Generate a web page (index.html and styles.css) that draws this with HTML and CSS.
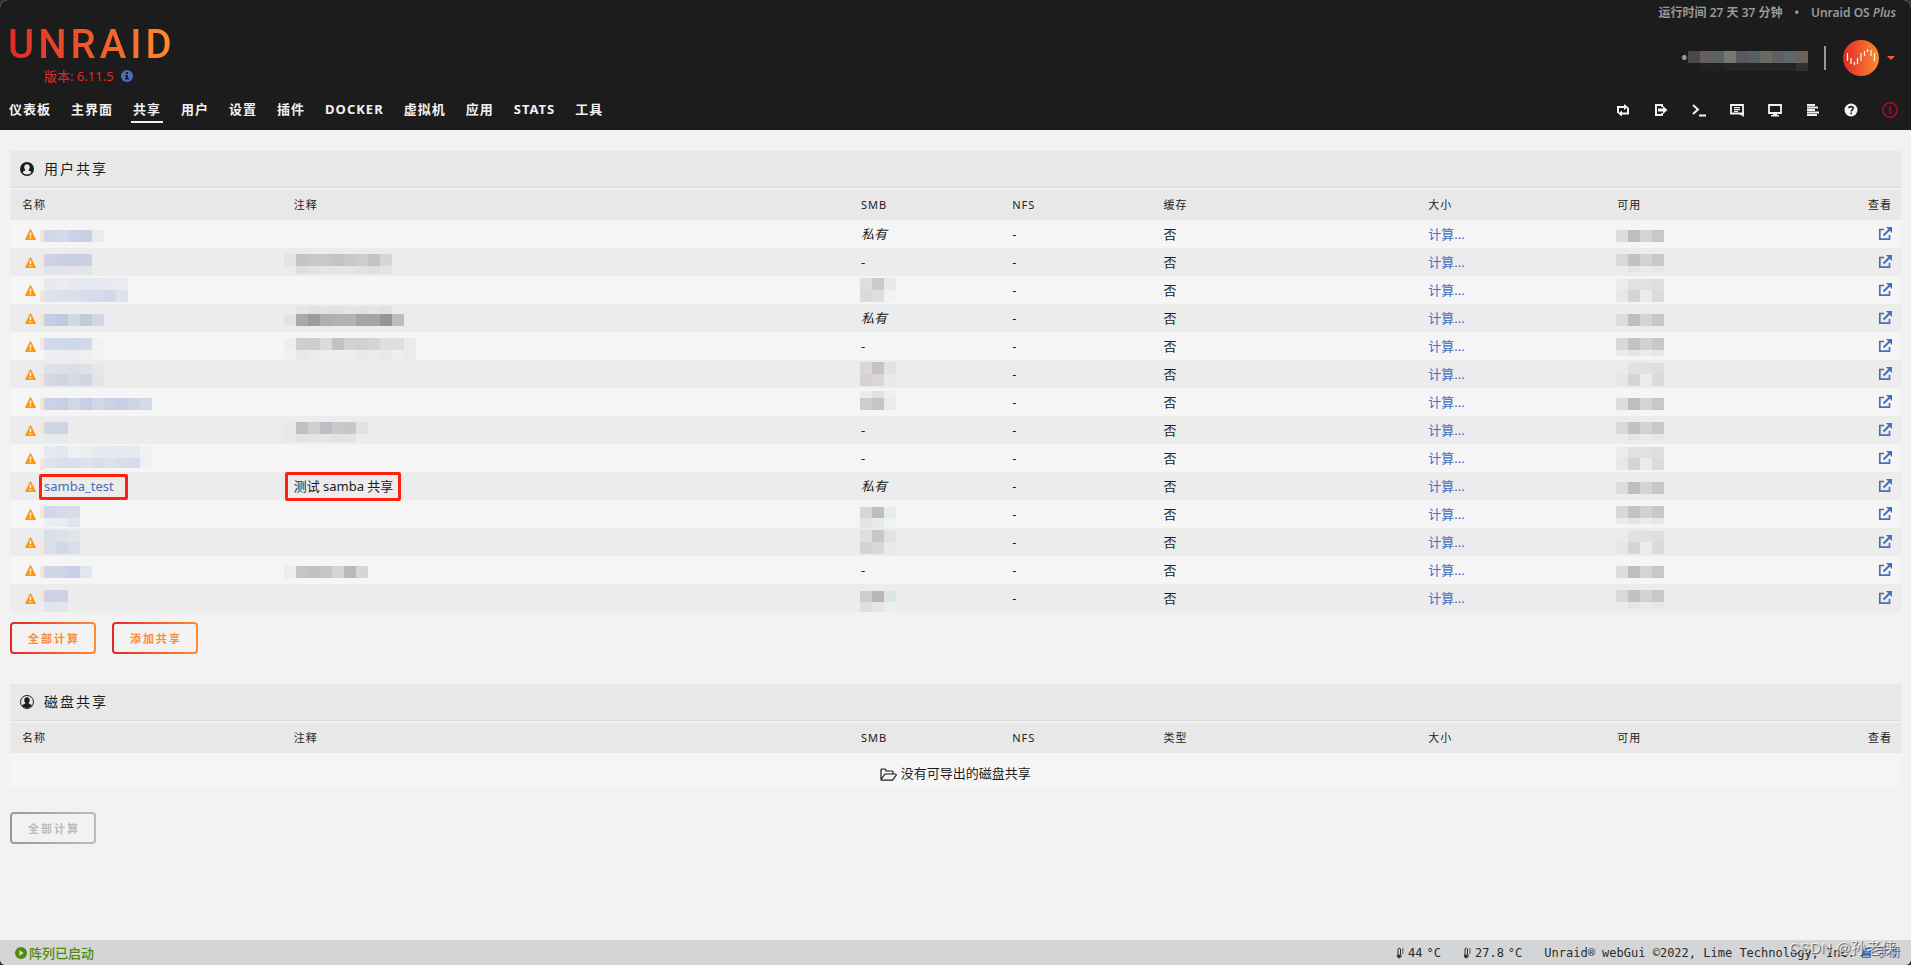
FILE: index.html
```html
<!DOCTYPE html>
<html lang="zh-CN">
<head>
    <meta charset="UTF-8">
    <meta name="viewport" content="width=device-width, initial-scale=1.0">
    <title>Tower/Shares</title>
    <link rel="stylesheet" href="styles.css">
</head>
<body>

    <!-- Header -->
    <header class="header">
        <div class="brand">
            <a href="#" class="logo">UNRAID</a>
            <div class="version">版本: 6.11.5
                <svg class="icon-info" viewBox="0 0 12 12"><circle cx="6" cy="6" r="6" fill="currentColor"/><path d="M5 2h2v2H5zM4 5h3v3h1v1.500H4V8h1V6.200H4z" fill="#1c1c1c"/></svg>
            </div>
        </div>
        <div class="server">
            <div class="uptime"><span>运行时间 27 天 37 分钟</span><span>•</span><span>Unraid OS <em>Plus</em></span></div>
            <div class="account">
                <span class="dot">•</span>
                <span id="serverName" class="server-name"></span>
                <span class="divider"></span>
                <svg class="avatar" viewBox="0 0 36 36">
                    <defs><linearGradient id="avatarFill"><stop offset="0" stop-color="#e22828"/><stop offset="1" stop-color="#ff8c2f"/></linearGradient></defs>
                    <circle cx="18" cy="18" r="18" fill="url(#avatarFill)"/>
                    <path d="M4.500 13v8M8 18v6M11.500 22v3M14.500 18v6M18 13v8M21.500 11v5M24.500 9v3M28 10v6M31.500 13v8" stroke="#fff" stroke-width="1.200"/>
                </svg>
                <svg class="caret" viewBox="0 0 8 4"><path d="M0 0h8L4 4z" fill="#f15a2c"/></svg>
            </div>
        </div>
    </header>

    <!-- Menu -->
    <nav class="nav">
        <div class="nav-left">
            <a href="#">仪表板</a>
            <a href="#">主界面</a>
            <a href="#" class="active">共享</a>
            <a href="#">用户</a>
            <a href="#">设置</a>
            <a href="#">插件</a>
            <a href="#">DOCKER</a>
            <a href="#">虚拟机</a>
            <a href="#">应用</a>
            <a href="#">STATS</a>
            <a href="#">工具</a>
        </div>
        <div class="nav-right">
            <a href="#" aria-label="language"><svg viewBox="0 0 14 14"><path d="M2 10V4h7M5 10.500h7V4.500" fill="none" stroke="currentColor" stroke-width="2"/><path d="M8 1l4 3-4 3zM6 7.500l-4 3 4 3z" fill="currentColor"/></svg></a>
            <a href="#" aria-label="logout"><svg viewBox="0 0 14 14"><path d="M8 4V2H2v10h6v-2" fill="none" stroke="currentColor" stroke-width="2"/><path d="M4 5.500h5V3l4.500 4L9 11V8.500H4z" fill="currentColor"/></svg></a>
            <a href="#" aria-label="terminal"><svg viewBox="0 0 14 14"><path d="M1 2l5 4.500L1 11M7 12.500h7" fill="none" stroke="currentColor" stroke-width="2"/></svg></a>
            <a href="#" aria-label="feedback"><svg viewBox="0 0 14 14"><path d="M1 2h12v8.500H1z" fill="none" stroke="currentColor" stroke-width="1.800"/><path d="M8 10h5.800v4zM4 4h6v1.200H4zM4 6h6v1.200H4zM4 8h4v1H4z" fill="currentColor"/></svg></a>
            <a href="#" aria-label="info"><svg viewBox="0 0 14 14"><path d="M1 2h12v8H1z" fill="none" stroke="currentColor" stroke-width="1.800"/><path d="M5 10h4v2h2v1.500H3V12h2z" fill="currentColor"/></svg></a>
            <a href="#" aria-label="log"><svg viewBox="0 0 14 14"><path d="M1 2h8M1 4.500h11M1 7h8M1 9.500h12M1 12h10" stroke="currentColor" stroke-width="1.900"/></svg></a>
            <a href="#" aria-label="help"><svg viewBox="0 0 14 14"><circle cx="7" cy="7" r="6.500" fill="currentColor"/><path d="M4.800 5.300C5 3 9.200 3 9.200 5.300 9.200 6.800 7.200 6.800 7.200 8.500M7.200 9.500v1.800" fill="none" stroke="#1c1c1c" stroke-width="1.600"/></svg></a>
            <a href="#" aria-label="alert" class="alert"><svg viewBox="0 0 16 16"><circle cx="8" cy="8" r="7.200" fill="none" stroke="currentColor" stroke-width="1.400"/><path d="M8 4v8" stroke="currentColor" stroke-width="1.600"/></svg></a>
        </div>
    </nav>

    <!-- Content -->
    <main class="content">
        <h2 class="title">
            <svg viewBox="0 0 14 14"><circle cx="7" cy="7" r="7" fill="currentColor"/><path d="M7 2.300c-3.300 0-3.400 4.200-1.500 5.600C5.300 9 2.800 8.800 2.600 10.600c2 2.500 6.800 2.500 8.800 0C11.200 8.800 8.700 9 8.500 7.900 10.400 6.500 10.300 2.300 7 2.300z" fill="#e8e8e8"/></svg>
            用户共享
        </h2>
        <table class="shares">
            <colgroup><col class="w15"><col class="w30"><col class="w8"><col class="w8"><col class="w14"><col class="w10"><col class="w10"><col class="w5"></colgroup>
            <thead>
                <tr><th>名称</th><th>注释</th><th>SMB</th><th>NFS</th><th>缓存</th><th>大小</th><th>可用</th><th>查看</th></tr>
            </thead>
            <tbody id="shareList"></tbody>
        </table>
        <div class="buttons">
            <button type="button">全部计算</button>
            <button type="button">添加共享</button>
        </div>

        <h2 class="title">
            <svg viewBox="0 0 14 14"><circle cx="7" cy="7" r="6.500" fill="none" stroke="currentColor"/><path d="M7 2.300c-3.300 0-3.400 4.200-1.500 5.600C5.300 9 2.800 8.800 2 10.600c2 3.300 8 3.300 10 0C11.200 8.800 8.700 9 8.500 7.900 10.400 6.500 10.300 2.300 7 2.300z" fill="currentColor"/></svg>
            磁盘共享
        </h2>
        <table class="shares">
            <colgroup><col class="w15"><col class="w30"><col class="w8"><col class="w8"><col class="w14"><col class="w10"><col class="w10"><col class="w5"></colgroup>
            <thead>
                <tr><th>名称</th><th>注释</th><th>SMB</th><th>NFS</th><th>类型</th><th>大小</th><th>可用</th><th>查看</th></tr>
            </thead>
            <tbody>
                <tr><td colspan="8" class="empty">
                    <svg viewBox="0 0 17 13"><path d="M1 11V2q0-1 1-1h3q1 0 1 1v1h6q1 0 1 1v2H5L1 11.500q0 .700 1 .700h10.500L16.300 7q0-1-1-1H13" fill="none" stroke="currentColor" stroke-width="1.200"/></svg>
                    没有可导出的磁盘共享
                </td></tr>
            </tbody>
        </table>
        <div class="buttons last">
            <button type="button" disabled>全部计算</button>
        </div>
    </main>

    <!-- Footer -->
    <footer class="footer">
        <div class="status">
            <svg viewBox="0 0 12 12"><circle cx="6" cy="6" r="6" fill="currentColor"/><path d="M4.300 3l4.500 3-4.500 3z" fill="#d4d5d6"/></svg>
            阵列已启动
        </div>
        <div class="footer-right">
            <span class="temp"><svg viewBox="0 0 8 12"><path d="M2 7V2q1-2 2.500 0v5q1.500 2 0 3.500-1.200 1-2.500 0Q.500 9 2 7zM6 2h1.500M6 4h1.500M6 6h1.500" fill="none" stroke="currentColor"/><circle cx="3.200" cy="9" r="1.400" fill="currentColor"/></svg>44<span>°C</span></span>
            <span class="temp"><svg viewBox="0 0 8 12"><path d="M2 7V2q1-2 2.500 0v5q1.500 2 0 3.500-1.200 1-2.500 0Q.500 9 2 7zM6 2h1.500M6 4h1.500M6 6h1.500" fill="none" stroke="currentColor"/><circle cx="3.200" cy="9" r="1.400" fill="currentColor"/></svg>27.8<span>°C</span></span>
            <span class="copyright">Unraid® webGui ©2022, Lime Technology, Inc.</span>
            <a href="#"><svg viewBox="0 0 12 12"><path d="M3 1h8.500L9.500 11H1.500Q0 10.500.500 9z" fill="currentColor"/><path d="M4.500 3h5M4 5h5M2 9.300h6.500" stroke="#d4d5d6"/></svg>手册</a>
        </div>
        <span class="watermark">CSDN @孙老侠</span>
    </footer>

    <script src="script.js"></script>
</body>
</html>
```
FILE: styles.css
```css
/* General */
* {
    box-sizing: border-box;
}

html {
    background-color: #333;
}

body {
    display: flex;
    flex-direction: column;
    min-height: 100vh;
    margin: 0;
    border-radius: 8px 8px 6px 6px;
    overflow: hidden;
    background-color: #f2f2f2;
    color: #1c1c1c;
    font-family: "Noto Sans", "Noto Sans CJK SC", sans-serif;
    font-size: 13px;
    line-height: 20px;
}

a {
    color: #486dba;
    text-decoration: none;
}

svg {
    flex: none;
}

/* Header */
.header {
    display: flex;
    justify-content: space-between;
    height: 90px;
    padding: 0 10px 0 8px;
    background-color: #1c1c1c;
}

.logo {
    display: block;
    width: 168px;
    margin-top: 24px;
    background-image: linear-gradient(90deg, #e22828, #ff8c2f);
    background-clip: text;
    color: transparent;
    font-family: Roboto, sans-serif;
    font-size: 40px;
    font-weight: 500;
    letter-spacing: 4px;
    line-height: 42px;
}

.version {
    display: flex;
    align-items: center;
    gap: 7px;
    padding-left: 36px;
    color: #e22828;
}

.icon-info {
    width: 12px;
    height: 12px;
    color: #486dba;
}

.server {
    display: flex;
    flex-direction: column;
    align-items: flex-end;
}

.uptime {
    display: flex;
    gap: 12px;
    padding: 3px 5px 0 0;
    color: #999;
    font-size: 12px;
    font-weight: 600;
}

.account {
    display: flex;
    align-items: center;
    margin-top: 17px;
    padding-right: 6px;
}

.dot {
    margin-right: 5px;
    color: #999;
    font-size: 20px;
}

.server-name {
    width: 115px;
    height: 20px;
}

.divider {
    width: 2px;
    height: 24px;
    margin: 0 17px 0 16px;
    background-color: #999;
}

.avatar {
    width: 36px;
    height: 36px;
}

.caret {
    width: 8px;
    height: 4px;
    margin-left: 8px;
}

/* Menu */
.nav {
    display: flex;
    justify-content: space-between;
    height: 40px;
    padding: 0 13px 0 9px;
    background-color: #1c1c1c;
}

.nav-left {
    display: flex;
    gap: 20px;
}

.nav-left a {
    height: 33px;
    padding-top: 9px;
    color: #f2f2f2;
    font-size: 13px;
    font-weight: bold;
    letter-spacing: 1px;
}

.nav-left a.active {
    margin: 0 -2px;
    padding: 9px 2px 0;
    border-bottom: 2px solid #f2f2f2;
}

.nav-right {
    display: flex;
    align-items: center;
    gap: 24px;
}

.nav-right a {
    display: flex;
    color: #f2f2f2;
}

.nav-right svg {
    width: 14px;
    height: 14px;
}

.nav-right a.alert {
    color: #b8082a;
}

.nav-right .alert svg {
    width: 16px;
    height: 16px;
}

/* Content */
.content {
    flex: 1;
    padding: 21px 10px 0;
}

.title {
    display: flex;
    align-items: center;
    gap: 10px;
    height: 37px;
    margin: 0 0 2px;
    padding-left: 10px;
    border-bottom: 1px solid #dfdfdf;
    background-color: #e8e8e8;
    font-size: 14px;
    font-weight: normal;
    letter-spacing: 2px;
}

.title svg {
    width: 14px;
    height: 14px;
}

.shares {
    width: 100%;
    table-layout: fixed;
    border-collapse: collapse;
}

.w5 { width: 5%; }
.w8 { width: 8%; }
.w10 { width: 10%; }
.w14 { width: 14%; }
.w15 { width: 15%; }
.w30 { width: 30%; }

.shares th {
    height: 30px;
    padding: 0;
    background-color: #e8e8e8;
    font-size: 11px;
    font-weight: normal;
    letter-spacing: 1px;
    text-align: left;
}

.shares th:first-child {
    padding-left: 12px;
}

.shares th:last-child {
    padding-right: 9px;
    text-align: right;
}

.shares td {
    position: relative;
    height: 28px;
    padding: 0;
    background-color: #f5f5f5;
}

.shares tr:nth-child(even) td {
    background-color: #ececec;
}

.name {
    display: flex;
    align-items: center;
    gap: 8px;
    padding-left: 15px;
}

.warning {
    width: 11px;
    height: 11px;
}

.mosaic {
    display: block;
    width: 1px;
    height: 28px;
    overflow: visible;
}

.mosaic-name {
    margin-left: -4px;
}

.view {
    display: flex;
    justify-content: flex-end;
    padding-right: 9px;
}

.view svg {
    width: 14px;
    height: 14px;
}

/* Highlight frames */
.frame {
    position: absolute;
    border: 3px solid #ff2012;
    border-radius: 2px;
}

.frame-name {
    top: 2px;
    left: 29px;
    width: 89px;
    height: 26px;
}

.frame-comment {
    top: 0;
    left: -9px;
    z-index: 1;
    width: 116px;
    height: 29px;
}

.shares td.empty {
    height: 36px;
    padding-top: 4px;
    text-align: center;
}

.empty svg {
    width: 17px;
    height: 13px;
    vertical-align: middle;
}

/* Buttons */
.buttons {
    display: flex;
    gap: 16px;
    padding: 10px 0 30px;
}

.buttons.last {
    padding-top: 23px;
}

button {
    height: 32px;
    padding: 0 14px 0 16px;
    border: 2px solid transparent;
    border-radius: 4px;
    background: linear-gradient(#f2f2f2, #f2f2f2) padding-box, linear-gradient(90deg, #e22828, #ff8c2f) border-box;
    color: #ff8c2f;
    font-family: inherit;
    font-size: 11px;
    font-weight: bold;
    letter-spacing: 2px;
    cursor: pointer;
}

button:disabled {
    background: linear-gradient(#f2f2f2, #f2f2f2) padding-box, linear-gradient(90deg, #999, #bbb) border-box;
    color: #bbb;
    cursor: default;
}

/* Footer */
.footer {
    position: relative;
    display: flex;
    justify-content: space-between;
    align-items: center;
    height: 25px;
    padding: 0 10px 0 15px;
    background-color: #d4d5d6;
}

.status {
    display: flex;
    align-items: center;
    gap: 2px;
    color: #4f8a10;
    font-weight: 500;
}

.status svg,
.footer-right a svg {
    width: 12px;
    height: 12px;
}

.footer-right {
    display: flex;
    color: #2b2b2b;
    font-family: "DejaVu Sans Mono", "Noto Sans CJK SC", monospace;
    font-size: 12px;
}

.temp,
.footer-right a {
    display: flex;
    align-items: center;
    gap: 4px;
}

.temp {
    margin-right: 22px;
}

.temp svg {
    width: 8px;
    height: 12px;
}

.copyright {
    margin-right: 6px;
}

.watermark {
    position: absolute;
    right: 15px;
    bottom: 7px;
    color: rgba(255, 255, 255, 0.7);
    font-family: "Liberation Sans", "Noto Sans CJK SC", sans-serif;
    font-size: 15px;
    text-shadow: 1px 1px 1px rgba(0, 0, 0, 0.6);
}
```
FILE: script.js
```js
// Hidden values: each strip is [x, y, height, colours of the 12px blocks]
const names = [
    [[4, 10, 12, "d0d7e8 d3daea ccd3e6 c6d1e6 eaebf0"]],
    [[4, 6, 12, "cdd3e4 cbd1e4 cad0e4 cacfe3"], [4, 18, 8, "dfe2e6 e4e5e8 e3e5e8 e3e4e8"]],
    [[4, 2, 12, "e7e9f0 ebecf0 e7e9f0 e4e8f0 e6e7ef e8eaf0 ebebef"], [4, 14, 12, "dfe3ec dbe0eb dbe0eb d7ddea d7dcea d2d8e8 dde2ec"]],
    [[4, 10, 12, "c4cde2 c0c9de d1d7e4 c3cade ced7e4"]],
    [[4, 6, 12, "d2d9e8 d0d9e8 cdd8e8 d0dae8 f1f2f3"], [4, 18, 10, "edeff2 edeff2 eeeff1 eff0f1 f2f2f3"]],
    [[4, 4, 10, "dde1e9 dcdfe6 dbdee6 dee1e8 e6e6e9"], [4, 14, 12, "d3d8e4 cfd5e1 d4dce7 d2d6e2 e4e5e9"]],
    [[4, 10, 12, "cad2e4 c8cfe3 cfd8e8 c7cfe3 d1d7e7 cdd2e6 c9cfe3 cfd4e5 d3dbe9"]],
    [[4, 6, 12, "cfd5e4 cdd5e4"], [4, 18, 9, "e8eaec e8e9eb"]],
    [[4, 2, 12, "e6e9f0 e3e7f0 eff0f3 eceef2 e8eaf0 e8e9ee e5e8ee e8e9ee f0f1f4"], [4, 14, 10, "dfe3ec d9dfeb dadfeb dfe2ec d8deea dde1ea d8dfea d4dce9 eeeff5"]],
    null,
    [[4, 6, 12, "d2d6e8 d4dbe9 d6dcea"], [4, 18, 9, "eceef2 eaecf1 e2e5f0"]],
    [[4, 2, 12, "dbe0e7 dee2e8 e1e4ea"], [4, 14, 12, "d9deea d2d8e5 d9deea"]],
    [[4, 10, 12, "ced5e6 ced5e6 c9d0e6 e2e6f0"]],
    [[4, 6, 12, "cdd2e2 cdd2e2"], [4, 18, 10, "e1e4e9 e3e5e9"]]
];

const comments = {
    1: [[-10, 6, 12, "e5e4e2 c4c4c6 cbc9c7 c8c8c8 c2c4c3 c8c8c9 d1cccc c2c3c5 d5d7d6"], [2, 18, 8, "dededf e3e2e0 e5e5e5 e5e5e5 e5e5e5 e3e3e3 dedede e4e4e4"]],
    3: [[2, 2, 8, "e5e6e5 dfe2e1 e1e4e3 e1e1e1 e4e4e4 e2e2e2 e4e4e4 e0e2e1"], [-10, 10, 12, "e6e2de a8a9ab 9c9d9f b1aeaf b3b2b2 b3b2b3 a6a5a4 a4a4a2 98968f b9bdc0"]],
    4: [[-10, 6, 12, "eeeeed cfcfcf cccdcf dcdbd8 c2c2c3 d1d3d2 d2d0ce d5d5d7 dfdfdf dfdfdf e9ebee"], [-10, 18, 10, "f1f1f1 e8e9e9 ebebeb eeeeee eeeeee eeeeee e9e9e9 ebebeb e8e9e9 eeeeee ebebeb"]],
    7: [[-10, 6, 12, "ebe7e4 bfc1c0 cfd1d0 c0bec5 c8cac9 c8c6c7 e0e2e2"], [-10, 18, 8, "e9e8e6 e4e4e4 e5e5e5 e6e6e6 e2e2e2 e4e4e4"]],
    12: [[-10, 10, 12, "ededec c5c5c4 c0c0c1 c5c4c7 d5d4d0 b8b9bf d6d6d6"]]
};

const smb = {
    2: [[-1, 2, 12, "dfdedd cdc8c9 e6eaea"], [-1, 14, 12, "dbdada e1dddf eff3f5"]],
    5: [[-1, 2, 12, "d9d8d8 c7c2c3 dfe3e4"], [-1, 14, 12, "d4d3d2 dad6d8 e7ebec"]],
    6: [[-1, 3, 7, "ebebec e3e1e2 eceeef"], [-1, 10, 12, "cfcdcc cbc4c6 e8ecee"]],
    10: [[-1, 7, 11, "d8d7d5 c3bcbf e6eceb"], [-1, 18, 10, "e4e4e3 eaeaea f0f3f3"]],
    11: [[-1, 2, 12, "dededd cbc6c8 e1e3e4"], [-1, 14, 12, "d3d3d1 dad6d8 e6ebeb"]],
    13: [[-1, 7, 11, "cfcdcc bcb6b8 dee3e3"], [-1, 18, 10, "dfdfdd e4e4e4 ebeeee"]]
};

const free = [
    [[-1, 10, 12, "dedddd c1bfbe d1d5d9 c8c8c9"]],
    [[-1, 6, 12, "d9d9d8 c4c2c0 d0d2d5 c8c8c8"], [-1, 18, 6, "eaeaea e4e4e4 ebebeb e7e7e7"]],
    [[-1, 3, 11, "ebebeb e1e1e0 e0e1e4 dededf"], [-1, 14, 12, "e8e7e6 d4d4d4 e9ecec dbdbdb"]]
];

// First and last rows of blocks that carry the orange edge of the warning icon
const edgeTop = [10, 6, 14];

function mosaic(strips) {
    let rects = "";
    strips.forEach(([x, y, h, colors]) => {
        colors.split(" ").forEach((c, i) => {
            rects += `<rect x="${x + i * 12}" y="${y}" width="12" height="${h}" fill="#${c}"/>`;
        });
    });
    return `<svg class="mosaic" shape-rendering="crispEdges">${rects}</svg>`;
}

const warning = `<svg class="warning" viewBox="0 0 11 11"><path d="M5.500 .500L10.500 10.500H.500z" fill="#ff9812" stroke="#ff9812" stroke-linejoin="round"/><path d="M5.500 3.500v3.500M5.500 8v1.500" stroke="#fff" stroke-width="1.400"/></svg>`;
const external = `<svg viewBox="0 0 14 14"><path d="M6 2.500H1.800v9.700h9.700V8" fill="none" stroke="currentColor" stroke-width="1.700"/><path d="M5.500 8.500L12 2" stroke="currentColor" stroke-width="2"/><path d="M8 0h6v6z" fill="currentColor"/></svg>`;
const isPrivate = [0, 3, 9];

let rows = "";
for (let i = 0; i < 14; i++) {
    let name, comment;
    if (names[i]) {
        name = `<svg class="mosaic mosaic-name" shape-rendering="crispEdges"><rect x="0" y="${edgeTop[i % 3]}" width="4" height="12" fill="#f5e6d9"/>${mosaic(names[i])}</svg>`;
        comment = comments[i] ? mosaic(comments[i]) : "";
    } else {
        name = `<a href="#">samba_test</a><span class="frame frame-name"></span>`;
        comment = `测试 samba 共享<span class="frame frame-comment"></span>`;
    }
    const smbText = smb[i] ? mosaic(smb[i]) : (isPrivate.includes(i) ? "<em>私有</em>" : "-");
    rows += `<tr>
        <td><div class="name">${warning}${name}</div></td>
        <td>${comment}</td>
        <td>${smbText}</td>
        <td>-</td>
        <td>否</td>
        <td><a href="#">计算...</a></td>
        <td>${mosaic(free[i % 3])}</td>
        <td><a href="#" class="view" aria-label="查看">${external}</a></td>
    </tr>`;
}
document.getElementById("shareList").innerHTML = rows;

document.getElementById("serverName").innerHTML = mosaic([
    [-5, 3, 12, "4a484b 656060 5b6262 777970 5c575d 566060 686a64 615e62 5f686b 6b625c"],
    [7, 15, 8, "222222 202222 242424 242424 242424 242424 242424 242424 303030"]
]);
```
